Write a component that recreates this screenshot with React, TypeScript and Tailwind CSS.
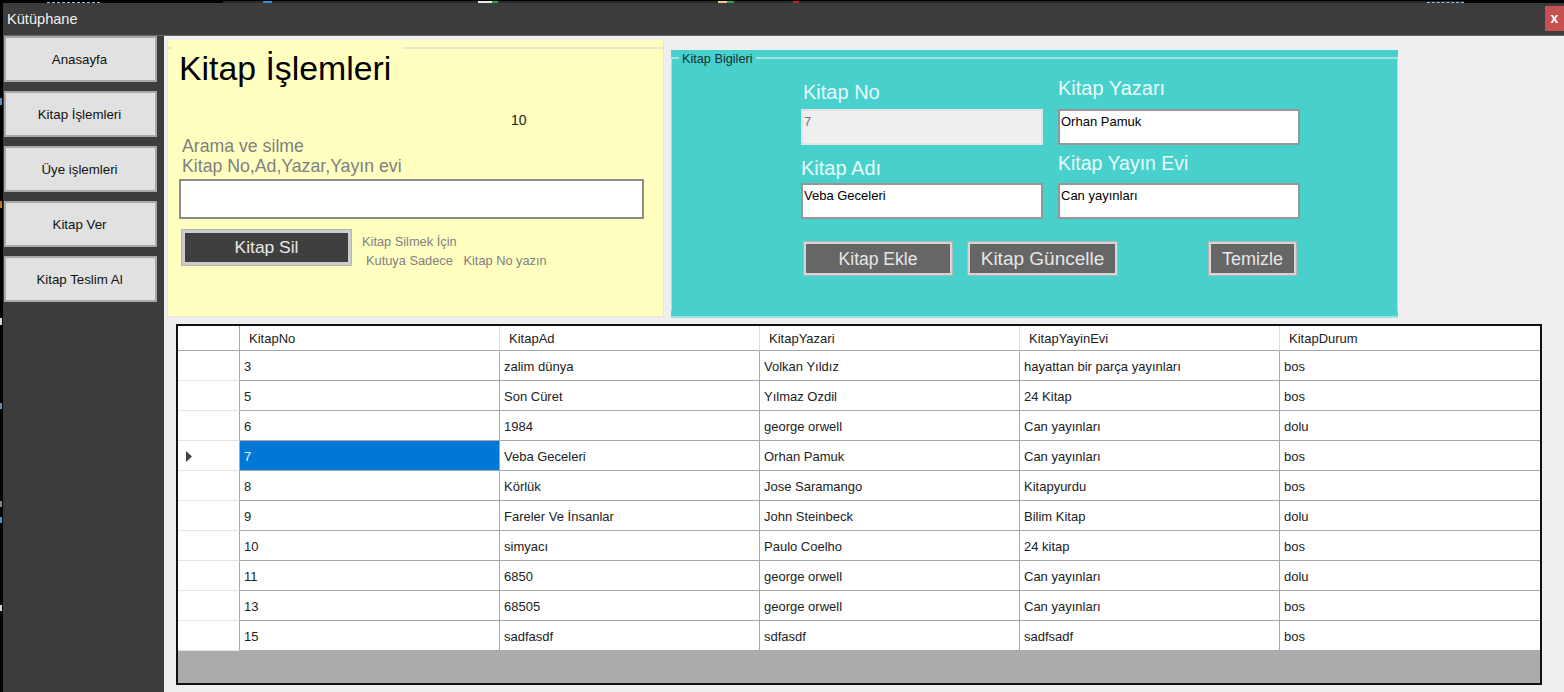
const menuItems = ['Anasayfa', 'Kitap İşlemleri', 'Üye işlemleri', 'Kitap Ver', 'Kitap Teslim Al'];

const columns = ['KitapNo', 'KitapAd', 'KitapYazari', 'KitapYayinEvi', 'KitapDurum'];

const rows = [
  ['3', 'zalim dünya', 'Volkan Yıldız', 'hayattan bir parça yayınları', 'bos'],
  ['5', 'Son Cüret', 'Yılmaz Ozdil', '24 Kitap', 'bos'],
  ['6', '1984', 'george orwell', 'Can yayınları', 'dolu'],
  ['7', 'Veba Geceleri', 'Orhan Pamuk', 'Can yayınları', 'bos'],
  ['8', 'Körlük', 'Jose Saramango', 'Kitapyurdu', 'bos'],
  ['9', 'Fareler Ve İnsanlar', 'John Steinbeck', 'Bilim Kitap', 'dolu'],
  ['10', 'simyacı', 'Paulo Coelho', '24 kitap', 'bos'],
  ['11', '6850', 'george orwell', 'Can yayınları', 'dolu'],
  ['13', '68505', 'george orwell', 'Can yayınları', 'bos'],
  ['15', 'sadfasdf', 'sdfasdf', 'sadfsadf', 'bos'],
];

const Field = ({
  label,
  value,
  labelClass,
  disabled,
}: {
  label: string;
  value: string;
  labelClass: string;
  disabled?: boolean;
}) => (
  <div className="flex flex-col justify-end">
    <p className={`leading-[24px] text-[#e9fbfa] ${labelClass}`}>{label}</p>
    <div
      className={`h-[36px] w-[242px] border-2 px-[1px] pt-[2px] text-[13px] leading-[18px] ${
        disabled
          ? 'border-[#e4e4e4] bg-[#efefef] text-[#777777]'
          : 'border-[#969696] bg-white text-black'
      }`}
    >
      {value}
    </div>
  </div>
);

const DarkButton = ({ label, className }: { label: string; className: string }) => (
  <button
    type="button"
    className={`h-[35px] border-[3px] border-[#d6d6d6] bg-[#666666] pt-[1px] text-[#e6e6e6] outline outline-1 -outline-offset-1 outline-[#b4b4b4] ${className}`}
  >
    {label}
  </button>
);

export default function App() {
  return (
    <div className="flex h-[692px] w-[1564px] flex-col overflow-hidden bg-black font-['Liberation_Sans',sans-serif]">
      {/* what shows of the desktop behind the window */}
      <div className="flex h-[3px] shrink-0 items-end overflow-hidden bg-black">
        <span className="ml-[47px] h-[2px] w-[53px] border-b border-dashed border-[#8fc4ee]" />
        <div className="ml-[123px] flex h-[2px] w-[1241px] bg-[#2a2a2a]">
          <span className="ml-[40px] w-[16px] bg-[#2f8fe0]" />
          <span className="ml-[206px] w-[25px] bg-[#e8e8e8]" />
          <span className="w-[10px] bg-[#27a844]" />
          <span className="ml-[220px] w-[16px] bg-[#e8cf8a]" />
          <span className="w-[12px] bg-[#27a844]" />
          <span className="ml-[59px] w-[10px] bg-[#c02020]" />
          <span className="ml-[628px] w-[65px] border-b border-dashed border-[#8fc4ee]" />
        </div>
      </div>
      <div className="flex min-h-0 flex-1">
        <div className="flex w-[3px] shrink-0 flex-col">
          <span className="mt-[95px] h-[7px] w-[2px] bg-[#5a90c8]" />
          <span className="mt-[96px] h-[7px] w-[2px] bg-[#c07820]" />
          <span className="mt-[110px] h-[7px] w-[2px] bg-[#d0d8e8]" />
          <span className="mt-[78px] h-[6px] w-[2px] bg-[#6090c0]" />
          <span className="mt-[92px] h-[6px] w-[2px] bg-[#8a8a8a]" />
          <span className="mt-[10px] h-[6px] w-[2px] bg-[#6090c0]" />
          <span className="mt-[82px] h-[6px] w-[2px] bg-[#d8d8d8]" />
        </div>
        <div className="flex min-w-0 flex-1 flex-col">
          {/* title bar */}
          <div className="flex h-[33px] shrink-0 items-start justify-between border-b border-[#6a6a6a] bg-[#3c3c3c]">
            <span className="pl-[4px] pt-[7px] text-[14.6px] leading-[18px] text-[#f0f0f0]">Kütüphane</span>
            <span className="mt-[3px] flex h-[25px] w-[19px] items-center justify-center bg-[#c75050] text-[14px] font-bold text-white">
              x
            </span>
          </div>

          <div className="flex min-h-0 flex-1">
            {/* sidebar */}
            <div className="flex w-[161px] shrink-0 flex-col gap-[9px] bg-[#3c3c3c] pl-[1px]">
              {menuItems.map((item) => (
                <button
                  key={item}
                  type="button"
                  className="h-[46px] w-[153px] border-2 border-[#a8a8a8] bg-[#e1e1e1] pr-[2px] pt-[2px] text-[13.3px] text-[#111111]"
                >
                  {item}
                </button>
              ))}
            </div>

            {/* content */}
            <div className="min-w-0 flex-1 bg-[#efefef] pl-[3px] pt-[4px]">
              <div className="flex items-start gap-[7px]">
                {/* yellow panel */}
                <div className="relative h-[277px] w-[497px] border-x border-b border-[#e9e9d2] bg-[#ffffc0] pl-[11px]">
                  <div className="absolute left-0 top-[7px] h-[2px] w-[4px] bg-[#e9e9d2]" />
                  <div className="absolute left-[234px] right-0 top-[7px] h-[2px] bg-[#e9e9d2]" />
                  <h1 className="pt-[9px] text-[33.8px] leading-[38px] text-black">Kitap İşlemleri</h1>
                  <p className="mt-[25px] pl-[332px] text-[14px] leading-[16px] text-[#222222]">10</p>
                  <p className="mt-[8px] pl-[3px] text-[17.7px] leading-[20px] text-[#808080]">
                    Arama ve silme
                    <br />
                    Kitap No,Ad,Yazar,Yayın evi
                  </p>
                  <div className="mt-[3px] h-[40px] w-[465px] border-2 border-[#8c8c8c] bg-white" />
                  <div className="mt-[10px] flex pl-[2px]">
                    <button
                      type="button"
                      className="h-[37px] w-[171px] border-[4px] border-[#cdcdcd] bg-[#3f3f3f] text-[17.4px] text-[#e8e8e8] outline outline-1 -outline-offset-1 outline-[#b4b4b4]"
                    >
                      Kitap Sil
                    </button>
                    <div className="pl-[10px] pt-[3px] text-[12.8px] leading-[19px] text-[#808080]">
                      <p>Kitap Silmek İçin</p>
                      <p className="whitespace-pre pl-[4px]">Kutuya Sadece   Kitap No yazın</p>
                    </div>
                  </div>
                </div>

                {/* teal panel */}
                <div className="mt-[10px] h-[268px] w-[727px] border-b-2 border-[#9fe3df] bg-[#48d1cc] pt-[7px]">
                  <div className="relative h-[254px] border-x border-t-2 border-[#a8e2df] pl-[129px]">
                    <span className="absolute left-[7px] top-[-8px] bg-[#48d1cc] px-[3px] text-[12.7px] leading-[16px] text-[#10302f]">
                      Kitap Bigileri
                    </span>
                    <div className="grid grid-cols-[257px_242px] gap-y-[6px] pt-[17px]">
                      <Field label="Kitap No" value="7" labelClass="mb-[5px] pl-[2px] text-[20px]" disabled />
                      <Field label="Kitap Yazarı" value="Orhan Pamuk" labelClass="mb-[9px] text-[20px]" />
                      <Field label="Kitap Adı" value="Veba Geceleri" labelClass="mb-[3px] text-[20px]" />
                      <Field label="Kitap Yayın Evi" value="Can yayınları" labelClass="mb-[8px] text-[19.5px]" />
                    </div>
                    <div className="mt-[22px] flex gap-[14px] pl-[2px]">
                      <DarkButton label="Kitap Ekle" className="w-[150px] text-[17.5px]" />
                      <DarkButton label="Kitap Güncelle" className="w-[151px] text-[19px]" />
                      <div className="pl-[76px]">
                        <DarkButton label="Temizle" className="w-[89px] text-[18px]" />
                      </div>
                    </div>
                  </div>
                </div>
              </div>

              {/* data grid */}
              <div className="ml-[9px] mt-[6px] flex h-[361px] w-[1366px] flex-col border-2 border-[#111111] bg-[#ababab]">
                <div className="grid h-[25px] grid-cols-[62px_260px_260px_260px_260px_260px] bg-white">
                  <div className="border-b border-r border-[#a8a8a8]" />
                  {columns.map((col) => (
                    <div
                      key={col}
                      className="border-b border-r border-b-[#a8a8a8] border-r-[#e0e0e0] pl-[9px] pt-[5px] text-[13px] leading-[16px] text-[#222222] last:border-r-0"
                    >
                      {col}
                    </div>
                  ))}
                </div>
                {rows.map((row, rowIndex) => (
                  <div key={row[0]} className="grid h-[30px] grid-cols-[62px_260px_260px_260px_260px_260px] bg-white">
                    <div className="flex items-center border-b border-r border-b-[#e4e4e4] border-r-[#a8a8a8] pl-[8px] pt-[1px]">
                      {rowIndex === 3 && (
                        <svg width="6" height="11" viewBox="0 0 6 11">
                          <path d="M0 0 L6 5.5 L0 11 Z" fill="#404040" />
                        </svg>
                      )}
                    </div>
                    {row.map((cell, cellIndex) => {
                      const selected = rowIndex === 3 && cellIndex === 0;
                      return (
                        <div
                          key={cellIndex}
                          className={`border-b border-r border-[#a8a8a8] pl-[4px] pt-[7px] text-[13px] leading-[18px] last:border-r-0 ${
                            selected ? 'bg-[#0078d7] text-[#e8f2fb]' : 'text-[#222222]'
                          }`}
                        >
                          {cell}
                        </div>
                      );
                    })}
                  </div>
                ))}
              </div>
            </div>
          </div>
        </div>
      </div>
    </div>
  );
}
